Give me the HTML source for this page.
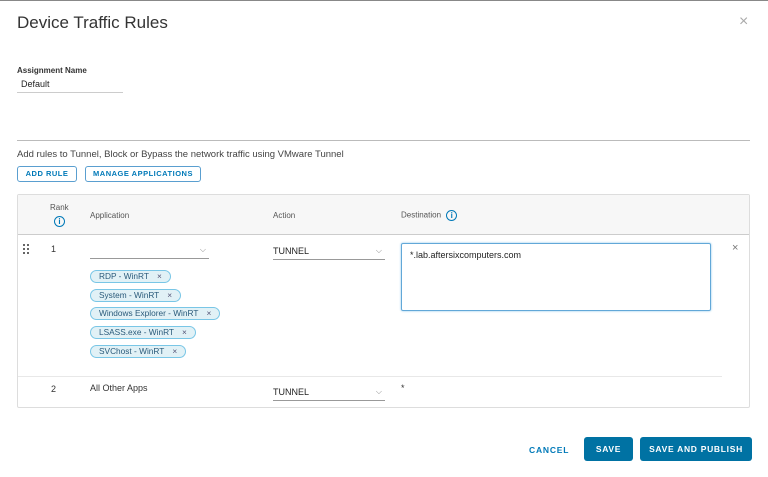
<!DOCTYPE html>
<html><head><style>
*{box-sizing:border-box;margin:0;padding:0}
body{width:768px;height:477px;background:#fff;font-family:"Liberation Sans",sans-serif;color:#333;position:relative;overflow:hidden}
.a{position:absolute}
.btn{position:absolute;border:1px solid #5a9fd0;border-radius:3px;color:#0079b8;font-size:7.5px;font-weight:bold;letter-spacing:.5px;text-align:center;line-height:14px}
.pb{position:absolute;background:#0072a3;color:#fff;border-radius:3px;font-size:8.5px;font-weight:bold;letter-spacing:.7px;text-align:center;line-height:24px;height:24px;top:437px}
.hd{font-size:8px;color:#555}
.sel{position:absolute;border-bottom:1px solid #999;height:14px;font-size:9px;color:#222}
.sel .c{position:absolute;right:3px;top:0;color:#888;font-size:8px}
.tag{position:absolute;left:90px;height:13px;border:1px solid #79c6e6;background:#e1f1f6;border-radius:7px;font-size:8.3px;color:#2a5a7a;line-height:11px;padding:0 8px}
.tag span{margin-left:8px;color:#557}
.inf{display:inline-block;width:11px;height:11px;border:1px solid #0079b8;border-radius:50%;color:#0079b8;font-size:8px;font-weight:bold;line-height:9px;text-align:center;vertical-align:middle}
.d{position:absolute;width:2px;height:2px;background:#666}
</style></head><body>
<div class="a" style="left:0;top:0;width:768px;height:1px;background:#888"></div>
<div class="a" style="left:17px;top:13px;font-size:17px;color:#333">Device Traffic Rules</div>
<div class="a" style="left:739px;top:13px;font-size:16px;color:#aaa">×</div>
<div class="a" style="left:17px;top:66px;font-size:8px;font-weight:bold;color:#333">Assignment Name</div>
<div class="a" style="left:17px;top:79px;width:106px;height:14px;border-bottom:1px solid #ccc;font-size:9px;padding-left:4px;color:#222">Default</div>
<div class="a" style="left:17px;top:140px;width:733px;height:1px;background:#bbb"></div>
<div class="a" style="left:17px;top:149px;font-size:9.5px;color:#444">Add rules to Tunnel, Block or Bypass the network traffic using VMware Tunnel</div>
<div class="btn" style="left:17px;top:166px;width:60px;height:16px">ADD RULE</div>
<div class="btn" style="left:85px;top:166px;width:116px;height:16px">MANAGE APPLICATIONS</div>

<div class="a" style="left:17px;top:194px;width:733px;height:214px;border:1px solid #ddd;border-radius:2px"></div>
<div class="a" style="left:18px;top:195px;width:731px;height:40px;background:#f7f7f7;border-bottom:1px solid #ccc"></div>
<div class="a hd" style="left:50px;top:203px">Rank</div>
<div class="a" style="left:54px;top:213px"><span class="inf">i</span></div>
<div class="a hd" style="left:90px;top:211px">Application</div>
<div class="a hd" style="left:273px;top:211px">Action</div>
<div class="a hd" style="left:401px;top:210px">Destination <span class="inf" style="margin-left:3px">i</span></div>

<div class="d" style="left:23px;top:244px"></div><div class="d" style="left:27px;top:244px"></div>
<div class="d" style="left:23px;top:248px"></div><div class="d" style="left:27px;top:248px"></div>
<div class="d" style="left:23px;top:252px"></div><div class="d" style="left:27px;top:252px"></div>
<div class="a" style="left:51px;top:244px;font-size:9px">1</div>
<div class="sel" style="left:90px;top:245px;width:119px"><span class="c">⌵</span></div>
<div class="sel" style="left:273px;top:246px;width:112px">TUNNEL<span class="c">⌵</span></div>
<div class="a" style="left:401px;top:243px;width:310px;height:68px;border:1px solid #62a8d8;box-shadow:0 0 2px #8cc4ea;border-radius:2px;font-size:9px;padding:6px 8px;color:#222">*.lab.aftersixcomputers.com</div>
<div class="a" style="left:732px;top:242px;font-size:11px;color:#777">×</div>

<div class="tag" style="top:270px">RDP - WinRT<span>×</span></div>
<div class="tag" style="top:289px">System - WinRT<span>×</span></div>
<div class="tag" style="top:307px">Windows Explorer - WinRT<span>×</span></div>
<div class="tag" style="top:326px">LSASS.exe - WinRT<span>×</span></div>
<div class="tag" style="top:345px">SVChost - WinRT<span>×</span></div>

<div class="a" style="left:18px;top:376px;width:704px;height:1px;background:#e8e8e8"></div>
<div class="a" style="left:51px;top:384px;font-size:9px">2</div>
<div class="a" style="left:90px;top:383px;font-size:9px">All Other Apps</div>
<div class="sel" style="left:273px;top:387px;width:112px">TUNNEL<span class="c">⌵</span></div>
<div class="a" style="left:401px;top:383px;font-size:9px">*</div>

<div class="a" style="left:529px;top:445px;font-size:8.5px;font-weight:bold;letter-spacing:.8px;color:#0079b8">CANCEL</div>
<div class="pb" style="left:584px;width:49px">SAVE</div>
<div class="pb" style="left:640px;width:112px">SAVE AND PUBLISH</div>
</body></html>
